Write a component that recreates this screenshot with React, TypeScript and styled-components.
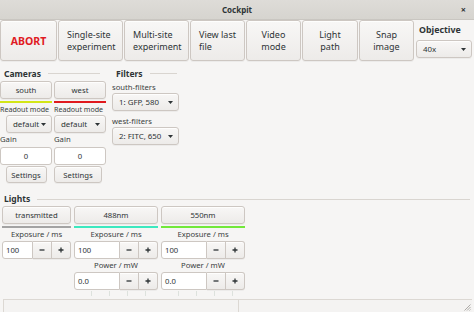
import React from "react";
import styled, { createGlobalStyle } from "styled-components";

const Global = createGlobalStyle`
  html, body { margin: 0; padding: 0; background: #f6f5f4; }
  body { width: 474px; height: 312px; overflow: hidden; }
  #root { width: 474px; height: 312px; }
  * { box-sizing: border-box; }
`;

const FONT = `"Noto Sans", "Open Sans", "DejaVu Sans", sans-serif`;

const Window = styled.div`
  width: 474px;
  height: 312px;
  display: flex;
  flex-direction: column;
  background: #f6f5f4;
  color: #2e3436;
  font-family: ${FONT};
  overflow: hidden;
`;

const TitleBar = styled.header`
  flex: none;
  height: 20px;
  display: grid;
  grid-template-columns: 1fr auto 1fr;
  align-items: center;
  background: linear-gradient(#dedcd8, #d6d4cf);
  border-bottom: 1px solid #c9c6c1;
`;

const Title = styled.div`
  grid-column: 2;
  font-size: 8px;
  font-weight: 700;
`;

const Close = styled.div`
  grid-column: 3;
  justify-self: end;
  margin-right: 8px;
  font-size: 9px;
  font-weight: 700;
`;

const ButtonBase = styled.button`
  margin: 0;
  padding: 0;
  font-family: ${FONT};
  color: #2e3436;
  border: 1px solid #cdc7c2;
  border-radius: 3px;
  background: linear-gradient(#f8f7f6, #edebe9);
  box-shadow: inset 0 1px rgba(255, 255, 255, 0.8), 0 1px rgba(0, 0, 0, 0.04);
`;

const Toolbar = styled.nav`
  flex: none;
  height: 41px;
  display: flex;
  gap: 1px;
`;

const ToolButton = styled(ButtonBase)<{ $w: number; $left?: boolean; $danger?: boolean }>`
  width: ${(p) => p.$w}px;
  height: 100%;
  font-size: ${(p) => (p.$danger ? "10.5px" : "9px")};
  font-weight: ${(p) => (p.$danger ? 700 : 400)};
  color: ${(p) => (p.$danger ? "#e01b24" : "#2e3436")};
  line-height: 12px;
  text-align: ${(p) => (p.$left ? "left" : "center")};
  padding: ${(p) => (p.$left ? "0 0 0 8px" : "0 3px")};
`;

const ObjectivePanel = styled.div`
  width: 56px;
  margin-left: 1px;
  display: flex;
  flex-direction: column;
`;

const ObjectiveLabel = styled.div`
  height: 20px;
  line-height: 20px;
  padding-left: 3px;
  font-size: 8.8px;
  font-weight: 700;
`;

const Combo = styled(ButtonBase)<{ $w?: number; $self?: string }>`
  width: ${(p) => (p.$w ? `${p.$w}px` : "100%")};
  align-self: ${(p) => p.$self || "stretch"};
  height: 18px;
  flex: none;
  display: flex;
  align-items: center;
  justify-content: space-between;
  padding: 0 5px 0 6px;
  font-size: 7.9px;
`;

const Arrow = () => (
  <svg width="5" height="3" viewBox="0 0 5 3">
    <path d="M0 0H5L2.5 3Z" fill="#2e3436" />
  </svg>
);

const Content = styled.main`
  flex: 1;
  min-height: 0;
  display: flex;
  flex-direction: column;
  padding-top: 4px;
`;

const TopRow = styled.div`
  display: flex;
  gap: 6px;
`;

const Section = styled.section<{ $w?: number }>`
  width: ${(p) => (p.$w ? `${p.$w}px` : "auto")};
  display: flex;
  flex-direction: column;
`;

const SectionHeader = styled.div<{ $h?: number; $lineRight?: number }>`
  height: ${(p) => p.$h || 16}px;
  display: flex;
  align-items: center;
  padding-left: 4px;
  font-size: 8.5px;
  font-weight: 700;
  &::after {
    content: "";
    flex: 1;
    height: 1px;
    background: #d9d5d0;
    margin: 1px ${(p) => p.$lineRight ?? 6}px 0 7px;
  }
`;

const CamColumns = styled.div`
  display: flex;
  gap: 2px;
`;

const Column = styled.div<{ $w: number }>`
  width: ${(p) => p.$w}px;
  display: flex;
  flex-direction: column;
`;

const SmallButton = styled(ButtonBase)<{ $w?: number; $self?: string; $h?: number }>`
  width: ${(p) => (p.$w ? `${p.$w}px` : "100%")};
  align-self: ${(p) => p.$self || "stretch"};
  height: ${(p) => p.$h || 18}px;
  flex: none;
  font-size: 7.7px;
`;

const Underline = styled.div<{ $color: string }>`
  height: 2px;
  margin-top: 2px;
  background: ${(p) => p.$color};
`;

const FieldLabel = styled.div<{ $h?: number; $mt?: number; $center?: boolean; $size?: number }>`
  height: ${(p) => p.$h || 12}px;
  line-height: ${(p) => p.$h || 12}px;
  margin-top: ${(p) => p.$mt || 0}px;
  font-size: ${(p) => p.$size || 7.7}px;
  white-space: nowrap;
  text-align: ${(p) => (p.$center ? "center" : "left")};
  color: #3a3f41;
`;

const Entry = styled.div<{ $mt?: number }>`
  height: 18px;
  margin-top: ${(p) => p.$mt || 0}px;
  background: #fff;
  border: 1px solid #cdc7c2;
  border-radius: 3px;
  font-size: 7.7px;
  line-height: 16px;
  text-align: center;
`;

const Spacer = styled.div<{ $h: number }>`
  height: ${(p) => p.$h}px;
  flex: none;
`;

const LightsGrid = styled.div`
  display: grid;
  grid-template-columns: 69px 84px 84px;
  column-gap: 3px;
  padding-left: 2px;
`;

const Spin = styled.div`
  height: 18px;
  margin-top: 1px;
  display: flex;
`;

const SpinEntry = styled.div`
  flex: 1;
  background: #fff;
  border: 1px solid #cdc7c2;
  border-radius: 3px 0 0 3px;
  padding-left: 3px;
  font-size: 7.7px;
  line-height: 16px;
`;

const SpinButton = styled(ButtonBase)`
  width: 19px;
  flex: none;
  border-left: none;
  border-radius: 0;
  display: flex;
  align-items: center;
  justify-content: center;
  &:last-child {
    border-radius: 0 3px 3px 0;
  }
`;

const Ticks = styled.div`
  height: 5px;
  margin-top: 1px;
  background: repeating-linear-gradient(90deg, transparent 0 17px, #dde2dd 17px 18px);
`;

const Footer = styled.footer`
  margin-top: auto;
  margin-left: 3px;
  margin-right: 2px;
  height: 13px;
  flex: none;
  display: grid;
  grid-template-columns: 235px 1fr;
  border-top: 1px solid #dcd8d3;
  position: relative;
`;

const FooterPane = styled.div`
  border-left: 1px solid #dcd8d3;
  background: #f4f3f2;
`;

const Grip = styled.svg`
  position: absolute;
  right: 1px;
  bottom: 1px;
`;

const Minus = () => (
  <svg width="6" height="6" viewBox="0 0 6 6">
    <path d="M0.5 3H5.5" stroke="#2e3436" strokeWidth="1.3" />
  </svg>
);

const Plus = () => (
  <svg width="6" height="6" viewBox="0 0 6 6">
    <path d="M0.5 3H5.5M3 0.5V5.5" stroke="#2e3436" strokeWidth="1.3" />
  </svg>
);

const SpinBox = ({ value }: { value: string }) => (
  <Spin>
    <SpinEntry>{value}</SpinEntry>
    <SpinButton>
      <Minus />
    </SpinButton>
    <SpinButton>
      <Plus />
    </SpinButton>
  </Spin>
);

type Cam = {
  name: string;
  color: string;
  comboW: number;
  comboSelf: string;
  setW: number;
  setSelf: string;
};

const cameras: Cam[] = [
  { name: "south", color: "#d3e617", comboW: 46, comboSelf: "flex-end", setW: 41, setSelf: "center" },
  { name: "west", color: "#e0191e", comboW: 52, comboSelf: "stretch", setW: 48, setSelf: "flex-start" },
];

type Light = { name: string; color: string; power: boolean };
const lights: Light[] = [
  { name: "transmitted", color: "#a3a3a3", power: false },
  { name: "488nm", color: "#3de8bf", power: true },
  { name: "550nm", color: "#72e83a", power: true },
];

export default function App() {
  return (
    <Window>
      <Global />
      <TitleBar>
        <Title>Cockpit</Title>
        <Close>×</Close>
      </TitleBar>
      <Toolbar>
        <ToolButton $w={57} $danger>
          ABORT
        </ToolButton>
        <ToolButton $w={65} $left>
          Single-site
          <br />
          experiment
        </ToolButton>
        <ToolButton $w={65} $left>
          Multi-site
          <br />
          experiment
        </ToolButton>
        <ToolButton $w={55} $left>
          View last
          <br />
          file
        </ToolButton>
        <ToolButton $w={55}>
          Video
          <br />
          mode
        </ToolButton>
        <ToolButton $w={56}>
          Light
          <br />
          path
        </ToolButton>
        <ToolButton $w={55}>
          Snap
          <br />
          image
        </ToolButton>
        <ObjectivePanel>
          <ObjectiveLabel>Objective</ObjectiveLabel>
          <Combo>
            <span>40x</span>
            <Arrow />
          </Combo>
        </ObjectivePanel>
      </Toolbar>
      <Content>
        <TopRow>
          <Section $w={106}>
            <SectionHeader>Cameras</SectionHeader>
            <CamColumns>
              {cameras.map((c) => (
                <Column $w={52} key={c.name}>
                  <SmallButton>{c.name}</SmallButton>
                  <Underline $color={c.color} />
                  <FieldLabel $size={7.1}>Readout mode</FieldLabel>
                  <Combo $w={c.comboW} $self={c.comboSelf}>
                    <span>default</span>
                    <Arrow />
                  </Combo>
                  <FieldLabel>Gain</FieldLabel>
                  <Entry $mt={2}>0</Entry>
                  <Spacer $h={1} />
                  <SmallButton $w={c.setW} $self={c.setSelf} $h={17}>
                    Settings
                  </SmallButton>
                </Column>
              ))}
            </CamColumns>
          </Section>
          <Section $w={68}>
            <SectionHeader $lineRight={3}>Filters</SectionHeader>
            <Column $w={67}>
              <FieldLabel $h={11} $mt={1}>
                south-filters
              </FieldLabel>
              <Combo>
                <span>1: GFP, 580</span>
                <Arrow />
              </Combo>
              <FieldLabel $h={11} $mt={5}>
                west-filters
              </FieldLabel>
              <Combo>
                <span>2: FITC, 650</span>
                <Arrow />
              </Combo>
            </Column>
          </Section>
        </TopRow>
        <Spacer $h={8} />
        <Section>
          <SectionHeader $h={15} $lineRight={4}>
            Lights
          </SectionHeader>
          <LightsGrid>
            {lights.map((l) => (
              <Column $w={l.name === "transmitted" ? 69 : 84} key={l.name}>
                <SmallButton>{l.name}</SmallButton>
                <Underline $color={l.color} />
                <FieldLabel $center>Exposure / ms</FieldLabel>
                <SpinBox value="100" />
                {l.power && (
                  <>
                    <FieldLabel $center>Power / mW</FieldLabel>
                    <SpinBox value="0.0" />
                    <Ticks />
                  </>
                )}
              </Column>
            ))}
          </LightsGrid>
        </Section>
        <Footer>
          <FooterPane />
          <FooterPane />
          <Grip width="8" height="8" viewBox="0 0 8 8">
            <path d="M7.5 1.5L1.5 7.5M7.5 4L4 7.5M7.5 6.5L6.5 7.5" stroke="#9a9793" strokeWidth="0.8" />
          </Grip>
        </Footer>
      </Content>
    </Window>
  );
}
